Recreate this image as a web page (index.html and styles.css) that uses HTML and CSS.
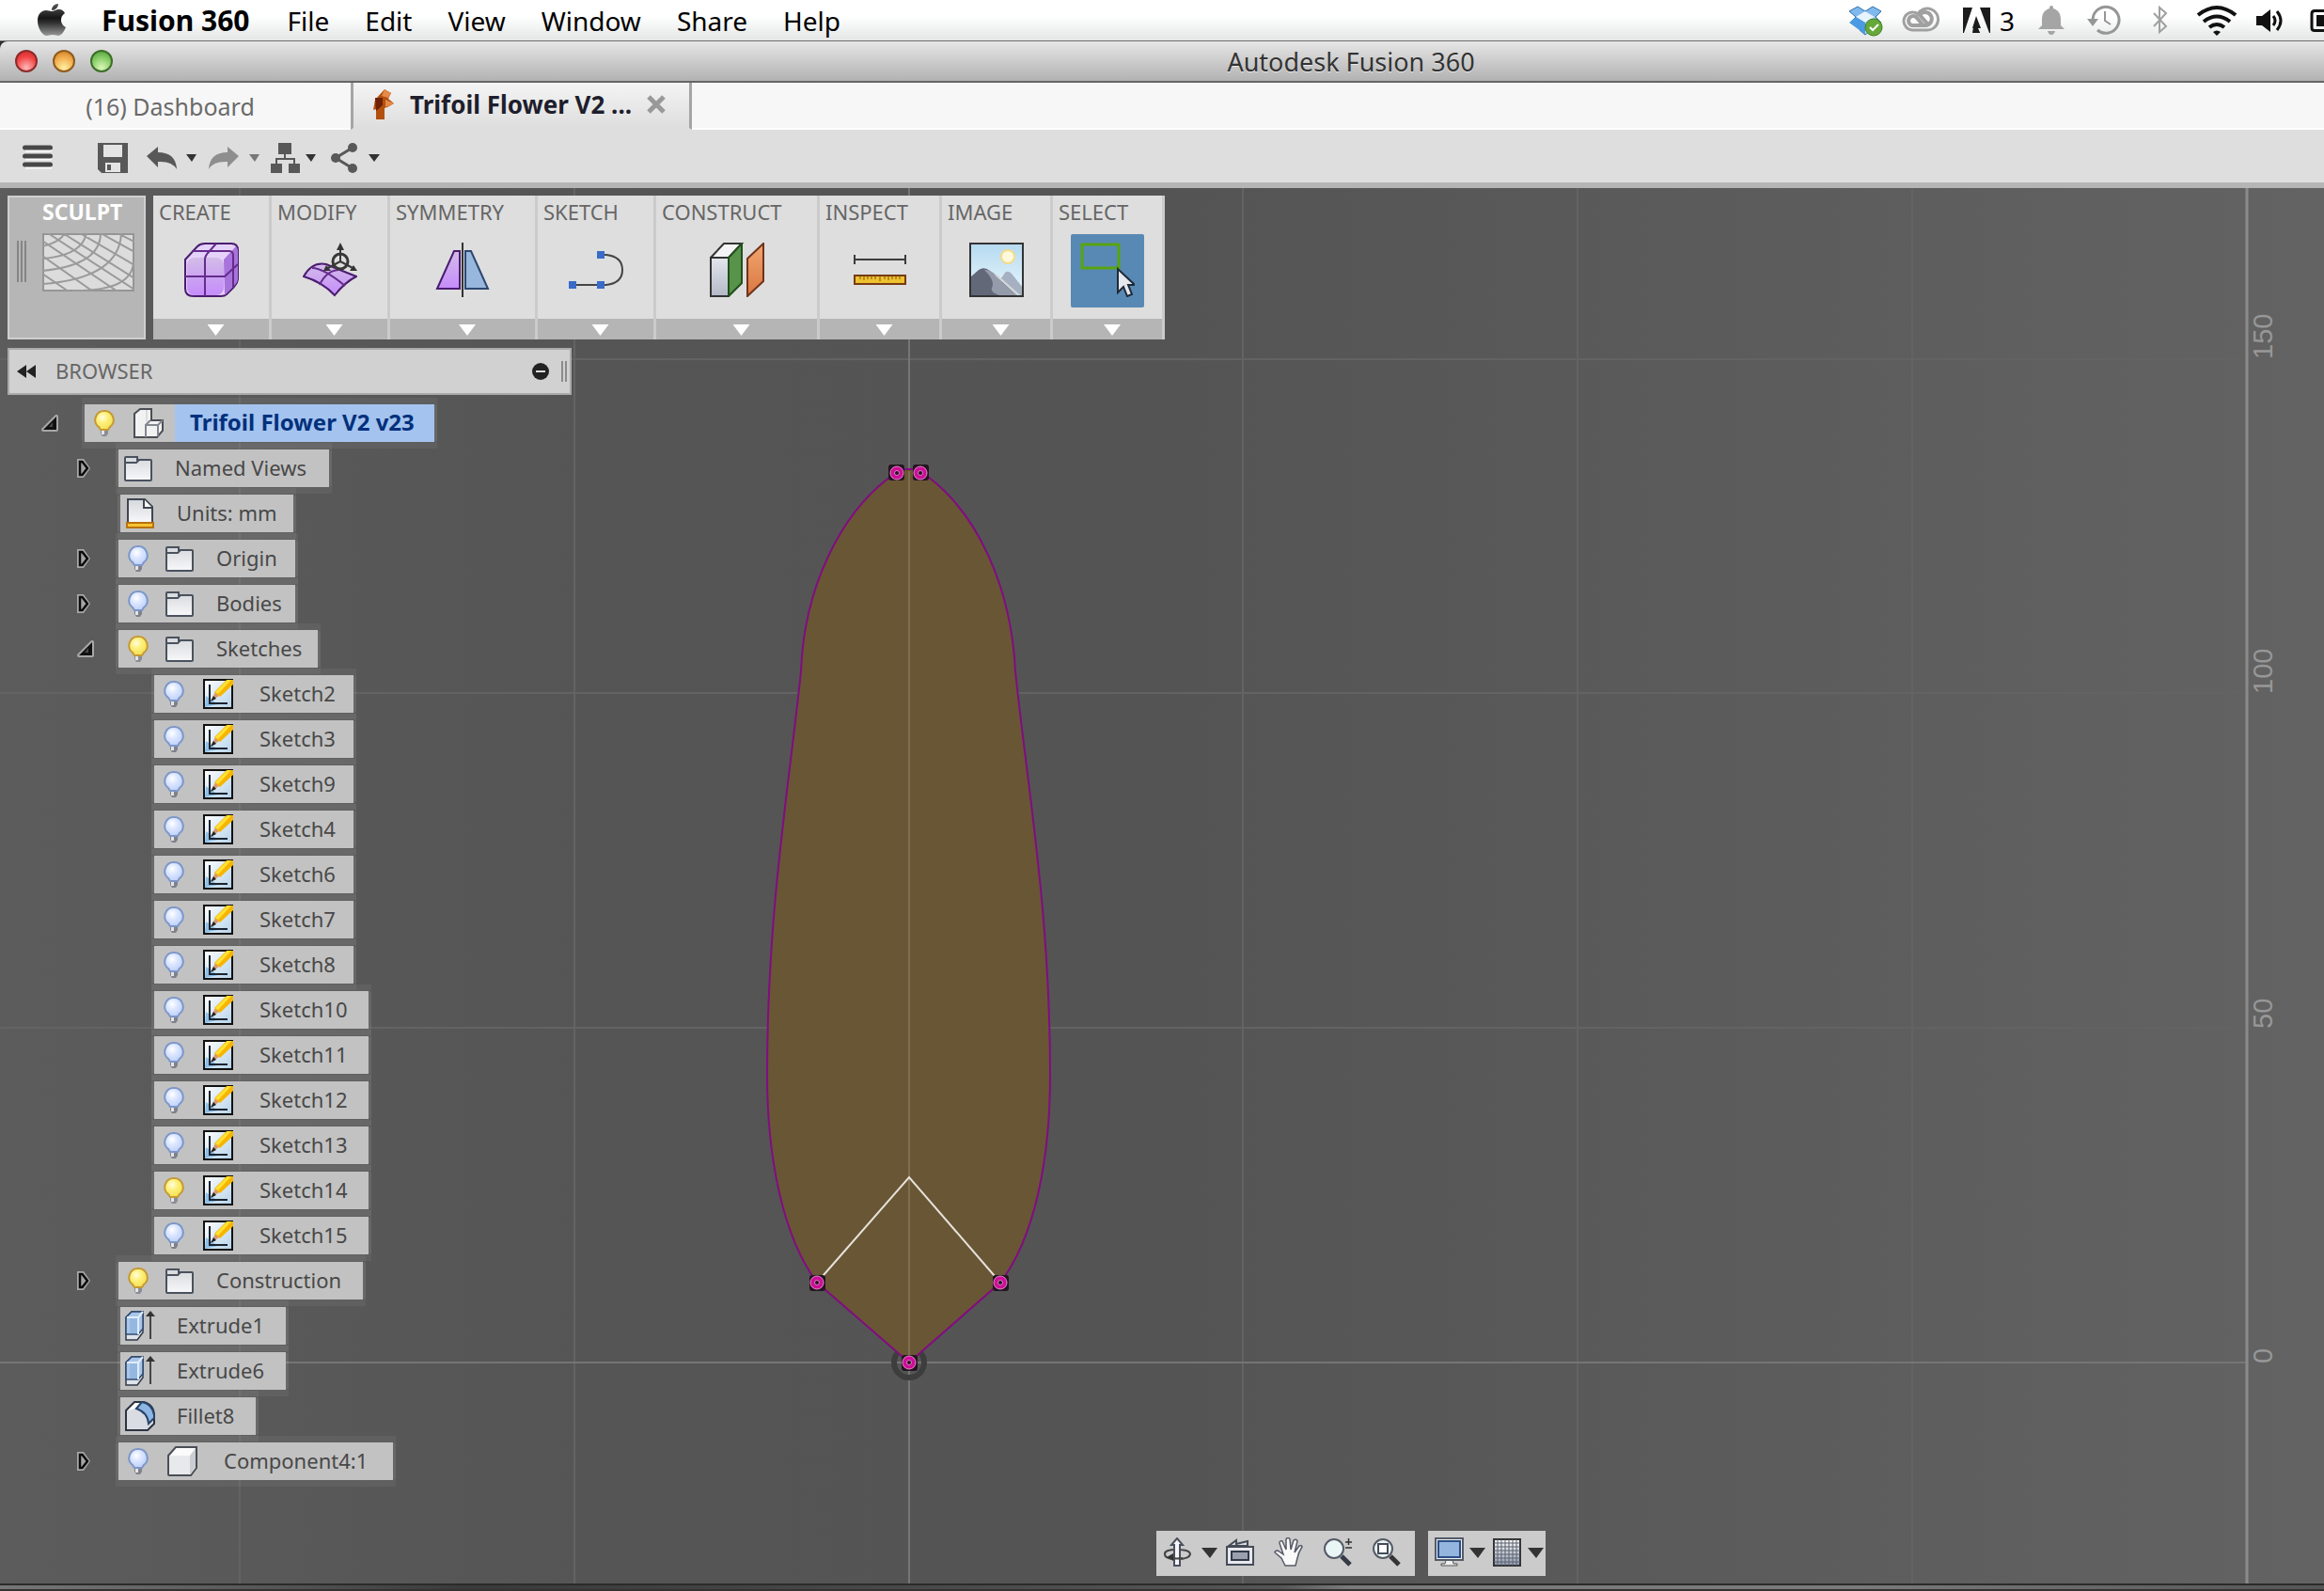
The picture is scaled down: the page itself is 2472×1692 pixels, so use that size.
FILE: index.html
```html
<!DOCTYPE html>
<html lang="en">
<head>
<meta charset="utf-8">
<title>Autodesk Fusion 360</title>
<link rel="stylesheet" href="styles.css">
</head>
<body>
<svg class="defs" width="0" height="0" aria-hidden="true">
  <defs>
    <linearGradient id="g-apple" x1="0" y1="0" x2="0" y2="1"><stop offset="0" stop-color="#555"/><stop offset=".45" stop-color="#161616"/><stop offset=".6" stop-color="#333"/><stop offset="1" stop-color="#999"/></linearGradient>
    <linearGradient id="g-purple" x1="0" y1="0" x2="0" y2="1"><stop offset="0" stop-color="#d3bce8"/><stop offset="1" stop-color="#c58cfb"/></linearGradient>
    <linearGradient id="g-steel" x1="0" y1="0" x2="0" y2="1"><stop offset="0" stop-color="#e4e6ec"/><stop offset="1" stop-color="#b4b9c8"/></linearGradient>
    <linearGradient id="g-orange" x1="0" y1="0" x2="0" y2="1"><stop offset="0" stop-color="#f2a672"/><stop offset="1" stop-color="#d9763f"/></linearGradient>
    <linearGradient id="g-sky" x1="0" y1="0" x2="0" y2="1"><stop offset="0" stop-color="#b5daf0"/><stop offset="1" stop-color="#eaf7fd"/></linearGradient>
    <linearGradient id="g-folder" x1="0" y1="0" x2="0" y2="1"><stop offset="0" stop-color="#d5d8dc"/><stop offset="1" stop-color="#f8f8f9"/></linearGradient>
    <linearGradient id="g-grid" x1="0" y1="0" x2="0" y2="1"><stop offset="0" stop-color="#fff"/><stop offset="1" stop-color="#8e99b0"/></linearGradient>
    <linearGradient id="g-pad" x1="0" y1="0" x2="1" y2="1"><stop offset="0" stop-color="#fff"/><stop offset="1" stop-color="#b4d2ea"/></linearGradient>
    <radialGradient id="g-on" cx=".4" cy=".35" r=".6"><stop offset="0" stop-color="#fffde0"/><stop offset=".5" stop-color="#fdf07a"/><stop offset="1" stop-color="#f5e25a"/></radialGradient>
    <radialGradient id="g-off" cx=".4" cy=".35" r=".6"><stop offset="0" stop-color="#fff"/><stop offset=".5" stop-color="#dbe6ff"/><stop offset="1" stop-color="#c3d4fb"/></radialGradient>
  </defs>
  <symbol id="bulb-on" viewBox="0 0 24 32">
    <path d="M8 21h8v6l-2 3h-4l-2-3z" fill="#8a8d96"/><path d="M9 22h3v6H9z" fill="#e4e5e8"/>
    <path d="M12 3a9.500 9.500 0 0 1 6 17l-2 3H8l-2-3a9.500 9.500 0 0 1 6-17z" fill="url(#g-on)" stroke="#c49a35" stroke-width="2"/>
  </symbol>
  <symbol id="bulb-off" viewBox="0 0 24 32">
    <path d="M8 21h8v6l-2 3h-4l-2-3z" fill="#7f828b"/><path d="M9 22h3v6H9z" fill="#e4e5e8"/>
    <path d="M12 3a9.500 9.500 0 0 1 6 17l-2 3H8l-2-3a9.500 9.500 0 0 1 6-17z" fill="url(#g-off)" stroke="#7d97c9" stroke-width="2"/>
  </symbol>
  <symbol id="folder" viewBox="0 0 32 32">
    <path d="M2 28V5q0-1 1-1h12v3h14q1 0 1 1v20q0 1-1 1H3q-1 0-1-1z" fill="url(#g-folder)" stroke="#4a525e" stroke-width="2"/>
    <path d="M2 10h12l3-3" fill="none" stroke="#4a525e" stroke-width="2"/>
  </symbol>
  <symbol id="sketch" viewBox="0 0 32 32">
    <path d="M1 1h30v30H1z" fill="url(#g-pad)" stroke="#111" stroke-width="2"/>
    <path d="M2 30l1-12 13 9z" fill="#58a4e0" opacity=".6"/>
    <path d="M7 6v20h19" fill="none" stroke="#1b2430" stroke-width="2"/>
    <path d="M8 24l5-10 4 4z" fill="#d79a72"/><path d="M8 24l3-6 3 3z" fill="#222"/>
    <path d="M12 14L25 1h7v5L18 19z" fill="#f7b500"/><path d="M13 14L26 1h4L16 16z" fill="#ffe234"/>
  </symbol>
  <symbol id="open" viewBox="0 0 18 18"><path d="M16 2v14H2z" fill="#111" stroke="#a8a8a8" stroke-width="4" stroke-linejoin="round"/><path d="M16 2v14H2z" fill="#111"/><path d="M12 8v5H8z" fill="#4a4a4a"/></symbol>
  <symbol id="closed" viewBox="0 0 14 20"><path d="M0 0h7l7 10-7 10H0z" fill="#a8a8a8"/><path d="M3 3h2.500l5.500 7-5.500 7H3z" fill="#a5a5a5" stroke="#0c0c0c" stroke-width="2.500"/></symbol>
  <symbol id="extrude" viewBox="0 0 32 32">
    <path d="M1 7l6-6h12v22l-6 8H1z" fill="#dfe3ea" stroke="#333a46" stroke-width="1.500"/>
    <path d="M1 7l6-6h12v18l-5 6H1z" fill="#a9c6e9" stroke="#2e486f" stroke-width="1.500"/><path d="M5 8h9v16H5z" fill="#94b8e2"/><path d="M2 7h12l5-6M14 7v18" fill="none" stroke="#e0edfa" stroke-width="2"/>
    <path d="M27 30V4" stroke="#444" stroke-width="2"/><path d="M22 6l5-6 5 6z" fill="#333"/>
  </symbol>
</svg>

<header class="menubar">
  <button class="apple" aria-label="Apple menu"><svg width="32" height="36" viewBox="0 0 32 36"><path d="M15 8c3 0 4-2 8-2 3 0 5 2 6 4-6 4-5 12 1 15-2 5-5 9-8 9-2 0-3-1-6-1s-4 1-6 1C5 34 0 26 0 18 0 11 4 7 9 7c3 0 4 1 6 1zM15 7c0-4 3-7 7-7 0 4-3 7-7 7z" fill="url(#g-apple)"/></svg></button>
  <nav class="menus">
    <button class="app">Fusion 360</button><button>File</button><button>Edit</button><button>View</button><button>Window</button><button>Share</button><button>Help</button>
  </nav>
  <div class="status">
    <button aria-label="Dropbox"><svg width="55" height="43"><path d="M10 12l9-5 8 5 8-5 9 5-6 6 6 6-9 5-2 3-6 5-6-5v-3l-10-5 6-6z" fill="#7fb9ee" stroke="#2d6ea9"/><path d="M17 18l10-6 10 6-10 6z" fill="#e8f4fd"/><path d="M17 18l10 6v12l-9-6-8-6z" fill="#4b9be4"/><path d="M27 24l10-6v12l-10 6z" fill="#b9dcf8"/><circle cx="36" cy="29" r="9" fill="#66a93a" stroke="#3f8120"/><path d="M32 29l3 3 6-6" fill="none" stroke="#fff" stroke-width="2"/></svg></button>
    <button aria-label="Creative Cloud"><svg width="63" height="43" fill="none" stroke="#a0a0a0" stroke-width="3"><path d="M22 32a9.500 9.500 0 0 1 1-19c2 0 4 1 5 2a11.500 11.500 0 1 1 9 17z"/><path d="M33 26l-7-8a5 5 0 1 0-2 9h12a7 7 0 1 0-6-11l8 9" stroke-width="4"/></svg></button>
    <button class="count" aria-label="Adobe, 3"><svg width="29" height="27" viewBox="0 0 29 27"><path d="M0 0h10L1 27H0zM18 0h11v27h-1zM14 9l5 13h-3l2 5h-5l-2-5h-1z" fill="#1c1c1c"/><path d="M11 21h4l3 6h-8z" fill="#1c1c1c"/></svg><span>3</span></button>
    <button aria-label="Notifications"><svg width="53" height="43"><path d="M27 6c2 0 2 2 2 3 6 2 8 6 8 12v6l4 4H13l4-4v-6c0-6 2-10 8-12 0-1 0-3 2-3zM23 33h8q-1 4-4 4t-4-4z" fill="#a5a5a5"/></svg></button>
    <button aria-label="Time Machine"><svg width="64" height="43"><path d="M18 21a14 14 0 1 1 5 11" fill="none" stroke="#969696" stroke-width="3"/><path d="M12 20h12l-6 8z" fill="#969696"/><path d="M31 12v10l6 4" fill="none" stroke="#969696" stroke-width="2"/></svg></button>
    <button aria-label="Bluetooth"><svg width="48" height="43"><path d="M19 14l13 14-7 6V8l7 6-13 14" fill="none" stroke="#a0a0a0" stroke-width="2"/></svg></button>
    <button aria-label="Wi-Fi"><svg width="70" height="43" fill="none" stroke="#111" stroke-width="4"><path d="M18 16q20-16 40 0M24 23q14-11 28 0M30 29q8-6 16 0"/><path d="M34 34q4-3 8 0l-4 4z" fill="#111" stroke="none"/></svg></button>
    <button aria-label="Volume"><svg width="53" height="43"><path d="M10 17h6l9-7v24l-9-7h-6z" fill="#111"/><path d="M28 17q4 5 0 10M32 12q8 10 0 20" fill="none" stroke="#111" stroke-width="3"/></svg></button>
    <button aria-label="Battery"><svg width="29" height="43"><path d="M34 11.500H19q-3 0-3 3v15q0 3 3 3h15" fill="none" stroke="#111" stroke-width="3"/><path d="M21 16h10v12H21z" fill="#111"/></svg></button>
  </div>
</header>

<div class="titlebar">
  <div class="lights"><button class="light red" aria-label="Close"></button><button class="light amber" aria-label="Minimize"></button><button class="light green" aria-label="Zoom"></button></div>
  <h1>Autodesk Fusion 360</h1>
</div>

<div class="tabs">
  <button class="tab">(16) Dashboard</button>
  <div class="tab active">
    <svg width="24" height="32" viewBox="0 0 24 32"><path d="M3 11L13 0l7 4-3 6 6 5-7 4-3 1v12H4V21l-3 1z" fill="#b4500e"/><path d="M13 0l7 4-3 5-7-2zM14 11l9 4-9 4z" fill="#e58a48"/><path d="M3 9l8 0v8l-7 6z" fill="#6e2104"/></svg>
    <button>Trifoil Flower V2 ...</button>
    <button class="close" aria-label="Close tab"><svg width="20" height="20" viewBox="0 0 20 20"><path d="M2 2l16 16M18 2L2 18" stroke="#999" stroke-width="5"/></svg></button>
  </div>
</div>

<div class="quickbar">
  <button class="data" aria-label="Data panel"><svg width="32" height="28" viewBox="0 0 32 28"><path d="M3 5h28M3 14h28M3 23h28" stroke="#fafafa" stroke-width="5"/><path d="M2.500 3h27M2.500 12h27M2.500 21h27" stroke="#484848" stroke-width="5" stroke-linecap="round"/></svg></button>
  <button class="save" aria-label="Save"><svg width="32" height="32" viewBox="0 0 32 32"><path d="M0 0h32v32H4l-4-4z" fill="#585858"/><path d="M6 2h20v13H6zM8 21h16v10H8z" fill="#e4e4e4"/><path d="M10 23h4v6h-4z" fill="#585858"/></svg></button>
  <button aria-label="Undo"><svg width="54" height="32"><path d="M0 14L12 4v6q19 0 20 18-5-9-20-8v6z" fill="#585858"/><path d="M42 12h11l-5 8z" fill="#333"/></svg></button>
  <button aria-label="Redo"><svg width="54" height="32"><path d="M32 14L20 4v6Q1 10 0 28q5-9 20-8v6z" fill="#8e8e8e"/><path d="M43 12h11l-5 8z" fill="#777"/></svg></button>
  <button aria-label="Workspace"><svg width="52" height="32"><path d="M8 0h14v12H8zM0 22h12v10H0zM19 22h12v10H19z" fill="#585858"/><path d="M15 12v5M6 22v-5h19v5" fill="none" stroke="#585858" stroke-width="2"/><path d="M37 12h11l-5 8z" fill="#333"/></svg></button>
  <button aria-label="Share"><svg width="54" height="32"><path d="M23 5L5 16l18 11" fill="none" stroke="#585858" stroke-width="3"/><circle cx="23" cy="5" r="5" fill="#585858"/><circle cx="5" cy="16" r="5" fill="#585858"/><circle cx="23" cy="27" r="5" fill="#585858"/><path d="M40 12h12l-6 8z" fill="#333"/></svg></button>
</div>

<main class="workspace">
  <svg class="viewport" width="100%" height="100%" aria-label="Sketch canvas">
    <g transform="translate(967 1249)">
      <g stroke="#636363" stroke-width="2">
        <path d="M-712-1300V500M-356-1300V500M355-1300V500M711-1300V500M1067-1300V500M-967-356H1422M-967-712H1422M-967-1067H1422"/>
      </g>
      <path d="M0-1300V500M-967 0H1422" stroke="#757575" stroke-width="2"/>
      <path d="M1423-1300V500" stroke="#8b8b8b" stroke-width="3"/>
      <circle r="16" fill="none" stroke="#3d3d3d" stroke-width="6"/>
      <path d="M0 0L-98-85C-135-135-151-220-151-306C-151-480-128-610-115-735C-112-820-75-905-13-947L-6-950H6L13-947C75-905 109-820 113-735C126-610 150-480 150-306C150-220 135-135 97-85Z" fill="#695635" stroke="#820c82" stroke-width="2"/>
      <path d="M0-948V-6" stroke="#7f6f51" stroke-width="2"/>
      <path d="M-98-85L0-197 97-85" fill="none" stroke="#e6e2da" stroke-width="2"/>
      <g fill="#241420">
        <rect x="-22" y="-955" width="17" height="17" rx="3"/><rect x="4" y="-955" width="17" height="17" rx="3"/><rect x="-106" y="-93" width="17" height="17" rx="3"/><rect x="89" y="-93" width="17" height="17" rx="3"/><rect x="-8" y="-8" width="17" height="17" rx="3"/>
      </g>
      <g fill="#cf0e98" stroke="#e08cc8" stroke-width="1">
        <circle cx="-13" cy="-946" r="7"/><circle cx="12" cy="-946" r="7"/><circle cx="-98" cy="-85" r="7"/><circle cx="97" cy="-85" r="7"/><circle r="7"/>
      </g>
      <g fill="#2a1024" stroke="#d77fc0" stroke-width="1">
        <circle cx="-13" cy="-946" r="2.500"/><circle cx="12" cy="-946" r="2.500"/><circle cx="-98" cy="-85" r="2.500"/><circle cx="97" cy="-85" r="2.500"/><circle r="2.500"/>
      </g>
      <g class="ruler">
        <text transform="translate(1450 1) rotate(-90)">0</text>
        <text transform="translate(1450 -355) rotate(-90)">50</text>
        <text transform="translate(1450 -711) rotate(-90)">100</text>
        <text transform="translate(1450 -1067) rotate(-90)">150</text>
      </g>
    </g>
  </svg>

  <div class="ribbon">
    <button class="sculpt">
      <span class="grip"></span>
      <span class="mode"><span>SCULPT</span>
        <svg width="98" height="62" viewBox="0 0 98 62"><path d="M1 1h96v60H1z" fill="#dcdcdc" stroke="#959595" stroke-width="2"/><g fill="none" stroke="#9a9a9a" stroke-width="2"><path d="M0 14Q18 10 24 0M0 27Q42 24 47 0M0 40Q62 34 62 0M0 54Q82 48 84 0M32 61Q96 62 97 30M6 0l92 60M0 8l80 54M22 0l76 48M0 24l54 38M40 0l58 34M0 43l28 19M62 0l36 20M80 0l18 9"/></g></svg>
      </span>
    </button>
    <div class="panels">
      <section class="panel w126"><h2>CREATE</h2><button class="tool" aria-label="Create form"><svg width="58" height="58"><path d="M1 18L14 4q3-3 8-3h28q7 0 7 7v30q0 4-4 9l-8 8q-2 2-6 2H10q-9 0-9-8z" fill="#e5d2fa" stroke="#4a1c70" stroke-width="2"/><path d="M42 18L55 4q2 2 2 6v28q0 4-4 8L43 56z" fill="#a874dc"/><rect x="3" y="16" width="39" height="40" rx="8" fill="url(#g-purple)"/><path d="M8 9h40q4 0 4 5v34M22 57V18q0-4 4-8l8-9M1 36h42l14-13" fill="none" stroke="#652c8d" stroke-width="2"/></svg></button><button class="more" aria-label="More create tools"></button></section>
      <section class="panel w126"><h2>MODIFY</h2><button class="tool" aria-label="Edit form"><svg width="58" height="58"><path d="M1 36Q10 20 25 23l12 5q10 4 20 8-12 6-23 20Q21 42 1 36z" fill="url(#g-purple)" stroke="#4a1c70" stroke-width="2"/><path d="M10 27q12 0 35 19M18 45q7-15 20-16" fill="none" stroke="#652c8d" stroke-width="2"/><g stroke="#383838" stroke-width="3" fill="none"><circle cx="40" cy="20" r="8"/><path d="M40 20V4M40 20L25 28M40 20l15 8" stroke-width="2"/></g><path d="M40 0l4 8h-8zM22 30l3-6 5 6zM58 30l-8 0 4-6z" fill="#333"/></svg></button><button class="more" aria-label="More modify tools"></button></section>
      <section class="panel w157"><h2>SYMMETRY</h2><button class="tool" aria-label="Mirror"><svg width="58" height="58"><path d="M2 49L20 9h6v40z" fill="url(#g-purple)" stroke="#4a1c70" stroke-width="2"/><path d="M32 9h6l18 40H32z" fill="#98b7dc" stroke="#2c4770" stroke-width="2"/><path d="M29 0v58" stroke="#333" stroke-width="2"/></svg></button><button class="more" aria-label="More symmetry tools"></button></section>
      <section class="panel w126"><h2>SKETCH</h2><button class="tool" aria-label="Line"><svg width="58" height="58"><path d="M4 45h36q17-2 17-16T40 13h-6" fill="none" stroke="#444" stroke-width="2"/><path d="M0 41h8v8H0zM30 41h8v8h-8zM30 9h8v8h-8z" fill="#3a6bc8"/></svg></button><button class="more" aria-label="More sketch tools"></button></section>
      <section class="panel w174"><h2>CONSTRUCT</h2><button class="tool" aria-label="Offset plane"><svg width="58" height="58"><path d="M1 16L15 1h19L20 16z" fill="#f4f4f6" stroke="#333" stroke-width="2"/><path d="M1 16h19v41H1z" fill="url(#g-steel)" stroke="#333" stroke-width="2"/><path d="M20 16L34 1v42L20 57z" fill="#58934a" stroke="#214f1c" stroke-width="2"/><path d="M40 17L57 1v40L40 57z" fill="url(#g-orange)" stroke="#70341a" stroke-width="2"/></svg></button><button class="more" aria-label="More construct tools"></button></section>
      <section class="panel w130"><h2>INSPECT</h2><button class="tool" aria-label="Measure"><svg width="58" height="58"><path d="M2 18h54M2 13v10M56 13v10" stroke="#3c3c3c" stroke-width="2"/><path d="M2 35h54v9H2z" fill="#edc22e" stroke="#763b14" stroke-width="2"/><path d="M8 36v3M12 36v4M16 36v3M20 36v3M24 36v3M29 36v5M34 36v3M38 36v4M42 36v3M46 36v3M50 36v3" stroke="#85500e"/></svg></button><button class="more" aria-label="More inspect tools"></button></section>
      <section class="panel w118"><h2>IMAGE</h2><button class="tool" aria-label="Capture image"><svg width="58" height="58"><path d="M1 1h56v56H1z" fill="url(#g-sky)"/><circle cx="41" cy="15" r="7" fill="#fff9dc" stroke="#f5dc88" stroke-width="2"/><path d="M26 50l12-18q3-3 7 1l12 15v9H26z" fill="#a5b1c1"/><path d="M1 37l9-8q6-4 12 1l14 13 14 14H1z" fill="#626878"/><path d="M16 29q9-1 19 13l15 15H36q-14-3-12-9 4-7-8-19z" fill="#949bab"/><path d="M28 34l26 23" stroke="#d6d8da" stroke-width="2"/><path d="M1 1h56v56H1z" fill="none" stroke="#333" stroke-width="2"/></svg></button><button class="more" aria-label="More image tools"></button></section>
      <section class="panel w119"><h2>SELECT</h2><button class="tool on" aria-label="Select"><svg width="58" height="58"><path d="M2 2h39v25H2z" fill="none" stroke="#58a40e" stroke-width="3"/><path d="M40 28v25l6-6 4 10 5-2-4-10h7z" fill="#e6e8ef" stroke="#1f2a38" stroke-width="2"/></svg></button><button class="more" aria-label="More select tools"></button></section>
    </div>
  </div>

  <aside class="browser">
    <div class="browser-head">
      <button aria-label="Collapse browser"><svg width="20" height="14"><path d="M10 0v14L0 7zM20 0v14l-10-7z" fill="#222"/></svg></button>
      <h2>BROWSER</h2>
      <button class="hide" aria-label="Hide browser"><svg width="18" height="18"><circle cx="9" cy="9" r="9" fill="#222"/><path d="M4 9h10" stroke="#ddd" stroke-width="2"/></svg></button>
      <span class="edge"></span>
    </div>
    <ul class="tree">
      <li class="root"><button class="twist" aria-label="Collapse"><svg width="18" height="18"><use href="#open"/></svg></button><div class="row"><svg class="bulb"><use href="#bulb-on"/></svg><svg class="icon" viewBox="0 0 32 32"><path d="M1 6l6-5h12v12h12v11l-6 7H1z" fill="#f2f2f3" stroke="#4a4e55" stroke-width="2"/><path d="M13 31V18l5-5M14 18h12l5-5M26 18v12" fill="none" stroke="#83878f" stroke-width="2"/><path d="M14 2v13" stroke="#ddd" stroke-width="2"/></svg><button class="label">Trifoil Flower V2 v23</button></div></li>
      <li><button class="twist" aria-label="Expand"><svg width="14" height="20"><use href="#closed"/></svg></button><div class="row w224 single"><svg class="icon"><use href="#folder"/></svg><button class="label">Named Views</button></div></li>
      <li class="leaf"><div class="row w184 single"><svg class="icon" viewBox="0 0 32 32"><path d="M3 26V1h18l8 8v17z" fill="url(#g-folder)" stroke="#3f4650" stroke-width="2"/><path d="M20 1v9h9" fill="#fff" stroke="#3f4650" stroke-width="2"/><path d="M2 26h28v5H2z" fill="#f6c431" stroke="#b9720d" stroke-width="2"/></svg><button class="label">Units: mm</button></div></li>
      <li><button class="twist" aria-label="Expand"><svg width="14" height="20"><use href="#closed"/></svg></button><div class="row w188"><svg class="bulb"><use href="#bulb-off"/></svg><svg class="icon"><use href="#folder"/></svg><button class="label">Origin</button></div></li>
      <li><button class="twist" aria-label="Expand"><svg width="14" height="20"><use href="#closed"/></svg></button><div class="row w188"><svg class="bulb"><use href="#bulb-off"/></svg><svg class="icon"><use href="#folder"/></svg><button class="label">Bodies</button></div></li>
      <li><button class="twist" aria-label="Collapse"><svg width="18" height="18"><use href="#open"/></svg></button><div class="row w212"><svg class="bulb"><use href="#bulb-on"/></svg><svg class="icon"><use href="#folder"/></svg><button class="label">Sketches</button></div></li>
      <li class="sub"><div class="row w212"><svg class="bulb"><use href="#bulb-off"/></svg><svg class="icon"><use href="#sketch"/></svg><button class="label">Sketch2</button></div></li>
      <li class="sub"><div class="row w212"><svg class="bulb"><use href="#bulb-off"/></svg><svg class="icon"><use href="#sketch"/></svg><button class="label">Sketch3</button></div></li>
      <li class="sub"><div class="row w212"><svg class="bulb"><use href="#bulb-off"/></svg><svg class="icon"><use href="#sketch"/></svg><button class="label">Sketch9</button></div></li>
      <li class="sub"><div class="row w212"><svg class="bulb"><use href="#bulb-off"/></svg><svg class="icon"><use href="#sketch"/></svg><button class="label">Sketch4</button></div></li>
      <li class="sub"><div class="row w212"><svg class="bulb"><use href="#bulb-off"/></svg><svg class="icon"><use href="#sketch"/></svg><button class="label">Sketch6</button></div></li>
      <li class="sub"><div class="row w212"><svg class="bulb"><use href="#bulb-off"/></svg><svg class="icon"><use href="#sketch"/></svg><button class="label">Sketch7</button></div></li>
      <li class="sub"><div class="row w212"><svg class="bulb"><use href="#bulb-off"/></svg><svg class="icon"><use href="#sketch"/></svg><button class="label">Sketch8</button></div></li>
      <li class="sub"><div class="row w228"><svg class="bulb"><use href="#bulb-off"/></svg><svg class="icon"><use href="#sketch"/></svg><button class="label">Sketch10</button></div></li>
      <li class="sub"><div class="row w228"><svg class="bulb"><use href="#bulb-off"/></svg><svg class="icon"><use href="#sketch"/></svg><button class="label">Sketch11</button></div></li>
      <li class="sub"><div class="row w228"><svg class="bulb"><use href="#bulb-off"/></svg><svg class="icon"><use href="#sketch"/></svg><button class="label">Sketch12</button></div></li>
      <li class="sub"><div class="row w228"><svg class="bulb"><use href="#bulb-off"/></svg><svg class="icon"><use href="#sketch"/></svg><button class="label">Sketch13</button></div></li>
      <li class="sub"><div class="row w228"><svg class="bulb"><use href="#bulb-on"/></svg><svg class="icon"><use href="#sketch"/></svg><button class="label">Sketch14</button></div></li>
      <li class="sub"><div class="row w228"><svg class="bulb"><use href="#bulb-off"/></svg><svg class="icon"><use href="#sketch"/></svg><button class="label">Sketch15</button></div></li>
      <li><button class="twist" aria-label="Expand"><svg width="14" height="20"><use href="#closed"/></svg></button><div class="row w260"><svg class="bulb"><use href="#bulb-on"/></svg><svg class="icon"><use href="#folder"/></svg><button class="label">Construction</button></div></li>
      <li class="leaf"><div class="row w176 single"><svg class="icon"><use href="#extrude"/></svg><button class="label">Extrude1</button></div></li>
      <li class="leaf"><div class="row w176 single"><svg class="icon"><use href="#extrude"/></svg><button class="label">Extrude6</button></div></li>
      <li class="leaf"><div class="row w144 single"><svg class="icon" viewBox="0 0 32 32"><path d="M1 10l9-9h10q11 3 11 15v8l-7 7H1z" fill="#d9dce3" stroke="#2d3340" stroke-width="2"/><path d="M3 10l8-8h5l-5 6z" fill="#fff"/><path d="M12 8l6-7q11 2 13 14v3l-6 6Q24 12 12 8z" fill="#8db6e2" stroke="#27456d" stroke-width="2"/></svg><button class="label">Fillet8</button></div></li>
      <li><button class="twist" aria-label="Expand"><svg width="14" height="20"><use href="#closed"/></svg></button><div class="row w292 component"><svg class="bulb"><use href="#bulb-off"/></svg><svg class="icon" viewBox="0 0 32 32"><path d="M1 10l8-9h22v22l-6 8H2q-1 0-1-1z" fill="#fbfbfb" stroke="#4a4e55" stroke-width="2"/><path d="M24 10l6-8v20l-6 8z" fill="#cccdd2"/><path d="M2 10h22v20H2z" fill="#e8e9eb"/></svg><button class="label">Component4:1</button></div></li>
    </ul>
  </aside>

  <nav class="navbar" aria-label="Navigation">
    <div class="group">
      <button class="wide" aria-label="Orbit"><svg width="58" height="32"><path d="M2 18q0 5 13 5t14-5q0-5-14-5T2 18z" fill="none" stroke="#444" stroke-width="2"/><path d="M12 30V8H9l6-7 6 7h-3v22z" fill="#f6f6fa" stroke="#4a505c" stroke-width="2"/><path d="M9 22q6 1 12 0" fill="none" stroke="#444" stroke-width="2"/><path d="M4 21l7-4v8z" fill="#333"/><path d="M41 11h17l-8 11z" fill="#333"/></svg></button>
      <button aria-label="Look at"><svg width="30" height="32"><path d="M3 9l8-6v4l12-3v5z" fill="#d9dce3" stroke="#454c58" stroke-width="2"/><path d="M1 10h28v19H1z" fill="#e6e8ee" stroke="#454c58" stroke-width="2"/><path d="M6 15h18v9H6z" fill="#9aa1ae" stroke="#333a46" stroke-width="2"/></svg></button>
      <button aria-label="Pan"><svg width="32" height="32"><path d="M12 30L8 22l-7-6q0-2 3-2l6 4L6 6q0-3 3-2l4 9 0-11q2-3 4 0l1 11 3-10q3-2 4 1l-3 12 5-7q3-1 3 1-4 6-5 12l-2 8z" fill="#fafafb" stroke="#555b66" stroke-width="1.500"/></svg></button>
      <button aria-label="Zoom"><svg width="32" height="32"><path d="M20 20l9 9" stroke="#343a46" stroke-width="5"/><circle cx="12" cy="12" r="10" fill="#eaf5f5" stroke="#555b66" stroke-width="2"/><path d="M24 5h7M27.500 1v7M24 11h7" stroke="#333" stroke-width="1.500"/></svg></button>
      <button aria-label="Fit"><svg width="32" height="32"><path d="M20 20l9 9" stroke="#343434" stroke-width="5"/><circle cx="12" cy="12" r="10" fill="#eaf5f5" stroke="#555b66" stroke-width="2"/><path d="M7 7h10v10H7z" fill="#fff" stroke="#454c58" stroke-width="2"/></svg></button>
    </div>
    <div class="group">
      <button class="wide" aria-label="Display settings"><svg width="56" height="32"><path d="M12 24h7l1 4h4v2H7v-2h4z" fill="#eee" stroke="#555"/><path d="M1 1h29v23H1z" fill="#eef0f5" stroke="#555b66" stroke-width="2"/><path d="M4 4h23v17H4z" fill="#93b5de" stroke="#2c4f86" stroke-width="2"/><path d="M37 11h17l-8 11z" fill="#333"/></svg></button>
      <button class="wide" aria-label="Grid settings"><svg width="56" height="32"><path d="M1 2h28v28H1z" fill="url(#g-grid)" stroke="#333" stroke-width="2"/><path d="M5 2v28M9 2v28M13 2v28M17 2v28M21 2v28M25 2v28M1 6h28M1 10h28M1 14h28M1 18h28M1 22h28M1 26h28" stroke="#5b616d"/><path d="M37 11h17l-8 11z" fill="#333"/></svg></button>
    </div>
  </nav>
</main>
<footer class="dock-edge"></footer>
</body>
</html>
```
FILE: styles.css
```css
* { box-sizing: border-box; }
body {
  margin: 0;
  min-height: 100vh;
  display: flex;
  flex-direction: column;
  font-family: "Noto Sans", "Open Sans", sans-serif;
  background: #2c2c2c;
  overflow: hidden;
}
button { font: inherit; color: inherit; background: none; border: 0; padding: 0; margin: 0; white-space: nowrap; }
h1, h2 { margin: 0; font-weight: 400; }
svg { display: block; flex: none; }
.defs { position: absolute; }

/* System menu bar */
.menubar {
  height: 44px;
  display: flex;
  align-items: center;
  background: linear-gradient(#fff 40%, #e4e6e6);
  border-bottom: 1px solid #6c6c6c;
  font-size: 28px;
  line-height: 36px;
  color: #000;
}
.apple { margin-left: 40px; margin-right: 36px; }
.menus { display: flex; align-items: center; gap: 38px; }
.menus .app { font-size: 30px; font-weight: 700; margin-right: 2px; }
.status { display: flex; margin-left: auto; }
.status .count { width: 80px; padding-left: 13px; display: flex; align-items: center; gap: 10px; }

/* Window title */
.titlebar {
  height: 44px;
  display: grid;
  grid-template-columns: 400px 1fr 0;
  align-items: center;
  background: linear-gradient(#e6e6e6, #b2b2b2);
  border-bottom: 2px solid #656565;
  border-top-left-radius: 8px;
}
.titlebar h1 { font-size: 27px; line-height: 40px; padding: 2px 0 0 404px; margin-left: -400px; color: #333; text-align: center; text-shadow: 0 1px 0 #e8e8e8; }
.titlebar h1 { padding-left: 2px; margin-left: 0; }
.lights { display: flex; gap: 16px; padding-left: 16px; }
.light { width: 24px; height: 24px; border-radius: 50%; border: 2px solid; }
.red { border-color: #8c2b2b; background: radial-gradient(circle at 50% 85%, #ffb9b9, #f24242 60%, #c92a2a); }
.amber { border-color: #8f5b1e; background: radial-gradient(circle at 50% 85%, #fff0a0, #f0a848 60%, #c97a20); }
.green { border-color: #3d6e2a; background: radial-gradient(circle at 50% 85%, #dcf8b8, #80c860 60%, #4f9838); }

/* Document tabs */
.tabs { height: 50px; display: flex; background: #f7f7f7; border-bottom: 2px solid #fff; font-size: 25px; color: #6a6a6a; }
.tab { width: 373px; padding-right: 11px; padding-top: 2px; }
.tab.active {
  width: 363px;
  height: 50px;
  padding: 0 25px 2px 20px;
  display: flex;
  align-items: center;
  justify-content: space-between;
  background: linear-gradient(#f4f4f4, #dedede);
  border-left: 3px solid #a5a5a5;
  border-right: 3px solid #a5a5a5;
  border-bottom: 2px solid #dedede;
  font-size: 26px;
  font-weight: 700;
  color: #1e1e2c;
}

/* Quick access bar */
.quickbar { height: 62px; display: flex; align-items: center; gap: 12px; padding: 4px 24px 0; background: #dedede; border-bottom: 6px solid #b5b5b5; }
.quickbar .data { margin-right: 36px; }
.quickbar .save { margin-right: 8px; }

/* Modelling canvas */
.workspace {
  position: relative;
  flex: 1;
  display: flex;
  flex-direction: column;
  align-items: flex-start;
  padding: 8px;
  background: linear-gradient(90deg, #5c5c5c, #555 25%, #545454 50%, #636363);
}
.viewport { position: absolute; inset: 0; }
.ruler { font: 29px "Liberation Sans", Arial, sans-serif; fill: #979797; }
.ribbon, .browser, .navbar { position: relative; }

.ribbon { display: flex; gap: 8px; height: 153px; font-size: 22px; color: #666; }
.sculpt { width: 147px; display: flex; align-items: flex-start; background: #b6b6b6; border: 2px solid #cfcfcf; text-align: left; color: #fff; }
.grip { width: 10px; height: 44px; margin: 46px 17px 0 8px; border: solid #858585; border-width: 0 2px; background: linear-gradient(90deg, transparent 33%, #858585 33%, #858585 66%, transparent 66%); }
.mode { display: grid; font-size: 23px; font-weight: 700; line-height: 30px; gap: 8px; }
.panels { display: flex; background: #dedede; }
.panel { display: flex; flex-direction: column; border-right: 3px solid #cbcbcb; }
.panel h2 { font-size: 22px; line-height: 34px; padding-left: 6px; }
.tool { align-self: center; width: 78px; height: 78px; margin: 7px 0 12px; padding-bottom: 2px; display: grid; place-items: center; }
.tool.on { background: #5889b4; border-radius: 2px; }
.more { height: 22px; background: #b5b5b5; }
.more::after { content: ""; display: block; margin: 2px auto 0; width: 18px; height: 12px; background: #fff; clip-path: polygon(0 0, 100% 0, 50% 100%); transform: translateX(5px); }
.w118 { width: 118px; }
.w119 { width: 119px; }
.w126 { width: 126px; }
.w130 { width: 130px; }
.w157 { width: 157px; }
.w174 { width: 174px; }

/* Browser tree */
.browser { margin-top: 9px; }
.browser-head { width: 600px; height: 50px; display: flex; align-items: center; padding: 0 3px 0 8px; background: #d1d1d1; border: 2px solid #aaa; color: #666; }
.browser-head h2 { font-size: 22px; margin-left: 21px; padding-bottom: 2px; line-height: 30px; }
.browser-head .hide { margin-left: auto; }
.edge { width: 6px; height: 22px; margin-left: 13px; border: solid #8b8b8b; border-width: 0 2px; }
.tree { list-style: none; margin: 10px 0 0; padding: 0; display: grid; gap: 8px; font-size: 22px; color: #484848; }
.tree li { display: flex; align-items: center; height: 40px; padding-left: 74px; }
.tree .root { padding-left: 36px; }
.tree .leaf { padding-left: 120px; }
.tree .sub { padding-left: 156px; }
.twist { width: 44px; }
.root .twist { width: 46px; }
.row {
  height: 40px;
  display: flex;
  align-items: center;
  padding-left: 9px;
  background: #c2c2c2;
  box-shadow: 0 4px 0 3px rgba(255, 255, 255, 0.05), 0 -4px 0 3px rgba(255, 255, 255, 0.05);
}
.bulb { width: 24px; height: 32px; margin-right: 16px; }
.icon { width: 32px; height: 32px; }
.label { flex: 1; height: 40px; text-align: left; padding: 0 0 2px 23px; line-height: 38px; }
.single { padding-left: 5px; }
.component .icon { margin-left: 3px; }
.component .label { padding-left: 28px; }
.sub .icon { margin-left: 3px; }
.sub .label { padding-left: 28px; }
.root .row { width: 372px; }
.root .icon { margin-left: 3px; }
.root .label { margin-left: 12px; padding-left: 16px; background: #a4c3ee; color: #00307c; font-size: 24px; font-weight: 700; }
.w144 { width: 144px; }
.w176 { width: 176px; }
.w184 { width: 184px; }
.w188 { width: 188px; }
.w212 { width: 212px; }
.w224 { width: 224px; }
.w228 { width: 228px; }
.w260 { width: 260px; }
.w292 { width: 292px; }

/* View controls */
.navbar { display: flex; gap: 14px; margin-top: auto; margin-left: calc(50% - 6px); }
.group { display: flex; height: 48px; padding-right: 4px; background: #cbcbcb; }
.group + .group { padding: 0 1px 0 0; }
.group button { width: 52px; display: grid; place-items: center; padding-bottom: 2px; }
.group .wide { width: 63px; padding-left: 7px; }
.group + .group .wide { width: 62px; }

.dock-edge { height: 8px; border-top: 2px solid #2b2b2b; border-bottom: 2px solid #333; background: linear-gradient(90deg, #777 0, #555 12%, #3a3a3a 20%, #555 55%, #7a7a7a 58%, #7a7a7a 80%, #555); }
```
